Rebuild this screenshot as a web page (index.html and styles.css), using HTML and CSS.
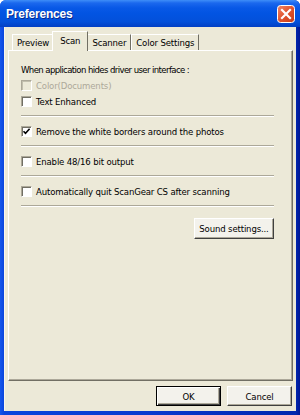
FILE: index.html
```html
<!DOCTYPE html>
<html>
<head>
<meta charset="utf-8">
<title>Preferences</title>
<link rel="stylesheet" href="styles.css">
</head>
<body>
<div class="window">
  <div class="titlebar">
    <span class="title">Preferences</span>
    <span class="close">
      <svg width="18" height="18" viewBox="0 0 18 18">
        <defs>
          <linearGradient id="cg" x1="0" y1="0" x2="1" y2="1">
            <stop offset="0" stop-color="#F0876A"/>
            <stop offset="0.5" stop-color="#E0542E"/>
            <stop offset="1" stop-color="#C43A18"/>
          </linearGradient>
        </defs>
        <rect x="0.5" y="0.5" width="17" height="17" rx="3" fill="url(#cg)" stroke="#fff" stroke-width="1"/>
        <path d="M5 5 L13 13 M13 5 L5 13" stroke="#fff" stroke-width="2.2" stroke-linecap="square"/>
      </svg>
    </span>
  </div>
  <div class="client">
    <div class="tabs">
      <div class="tab">Preview</div>
      <div class="tab active">Scan</div>
      <div class="tab">Scanner</div>
      <div class="tab">Color Settings</div>
    </div>
    <div class="panel">
      <div class="label">When application hides driver user interface :</div>
      <div class="row disabled"><span class="cb"></span><span>Color(Documents)</span></div>
      <div class="row"><span class="cb"></span><span>Text Enhanced</span></div>
      <div class="sep"></div>
      <div class="row"><span class="cb"><svg width="9" height="9" viewBox="0 0 9 9"><path d="M1.5 4.2 L3.5 6.3 L7.6 1.8" fill="none" stroke="#000" stroke-width="1.6"/></svg></span><span>Remove the white borders around the photos</span></div>
      <div class="sep"></div>
      <div class="row"><span class="cb"></span><span>Enable 48/16 bit output</span></div>
      <div class="sep"></div>
      <div class="row"><span class="cb"></span><span>Automatically quit ScanGear CS after scanning</span></div>
      <div class="sep"></div>
      <div class="btnrow"><button class="btn sound">Sound settings...</button></div>
    </div>
    <div class="footer">
      <button class="btn default">OK</button>
      <button class="btn">Cancel</button>
    </div>
  </div>
</div>
</body>
</html>
```

FILE: styles.css
```css
html, body {
  margin: 0;
  padding: 0;
  background: #fff;
}
body {
  width: 300px;
  height: 415px;
  overflow: hidden;
  font-family: "DejaVu Sans Condensed", "Liberation Sans", Arial, sans-serif;
  font-size: 9.5px;
  letter-spacing: -0.15px;
  color: #000;
}
.window {
  width: 300px;
  height: 415px;
  display: flex;
  flex-direction: column;
  border-radius: 6px 6px 0 0;
  overflow: hidden;
  background: linear-gradient(90deg, #1456EC 0, #0A45DD 4px, #0A3ACF 50%, #0026AE 296px, #001694 300px);
}
.titlebar {
  flex: none;
  height: 27px;
  display: flex;
  align-items: center;
  justify-content: space-between;
  padding: 0 5px 0 6px;
  background: linear-gradient(180deg, #3E8EF8 0, #1B68EE 3px, #0858E6 8px, #0254E2 50%, #0350DA 80%, #023FC4 100%);
}
.title {
  color: #fff;
  font-family: "Liberation Sans", Arial, sans-serif;
  font-weight: bold;
  font-size: 12px;
  letter-spacing: -0.2px;
  text-shadow: 1px 1px 0 #0A2A8E;
}
.close {
  display: flex;
  width: 18px;
  height: 18px;
}
.client {
  flex: 1;
  margin: 0 4px 4px;
  background: #ECE9D8;
  display: flex;
  flex-direction: column;
  box-shadow: inset 1px 0 0 #F7F5EC;
}
.tabs {
  flex: none;
  height: 23px;
  display: flex;
  align-items: flex-end;
  padding-left: 8px;
}
.tab {
  height: 16px;
  box-sizing: border-box;
  padding: 0 4px;
  line-height: 15px;
  border-top: 1px solid #fff;
  border-left: 1px solid #fff;
  border-right: 1px solid #716F64;
  background: #ECE9D8;
  white-space: nowrap;
}
.tab.active {
  height: 20px;
  margin: 0 -1px -1px -2px;
  padding: 0 7px;
  line-height: 17px;
  position: relative;
  z-index: 1;
}
.panel {
  flex: none;
  height: 331px;
  box-sizing: border-box;
  margin: 0 3px 0 4px;
  border: 1px solid;
  border-color: #fff #716F64 #716F64 #fff;
  box-shadow: inset -1px -1px 0 #ACA899;
  padding: 11px 18px 0 12px;
}
.label {
  height: 15px;
  line-height: 15px;
  letter-spacing: -0.6px;
}
.row {
  height: 16px;
  display: flex;
  align-items: center;
  gap: 4px;
}
.cb {
  flex: none;
  width: 11px;
  height: 11px;
  box-sizing: border-box;
  background: #fff;
  border: 1px solid;
  border-color: #ACA899 #fff #fff #ACA899;
  box-shadow: inset 1px 1px 0 #716F64;
  display: flex;
  align-items: center;
  justify-content: center;
}
.row.disabled {
  color: #ACA899;
}
.row.disabled .cb {
  background: #ECE9D8;
  box-shadow: inset 1px 1px 0 #C2BFAE;
}
.sep {
  height: 0;
  border-top: 1px solid #ACA899;
  border-bottom: 1px solid #fff;
  margin: 6px 0;
}
.btnrow {
  display: flex;
  justify-content: flex-end;
  margin-top: 11px;
}
.btn {
  font: inherit;
  letter-spacing: inherit;
  color: #000;
  box-sizing: border-box;
  width: 65px;
  height: 20px;
  padding: 0;
  background: #F3F2EC;
  border: 1px solid;
  border-color: #fff #404040 #404040 #fff;
  box-shadow: inset -1px -1px 0 #ACA899;
  border-radius: 0;
}
.btn.sound {
  width: 80px;
  height: 21px;
}
.btn.default {
  border: 1px solid #000;
  box-shadow: inset 1px 1px 0 #fff, inset -1px -1px 0 #404040, inset -2px -2px 0 #ACA899;
}
.footer {
  flex: 1;
  display: flex;
  justify-content: flex-end;
  align-items: flex-start;
  gap: 6px;
  padding: 5px 4px 0 0;
}
```
